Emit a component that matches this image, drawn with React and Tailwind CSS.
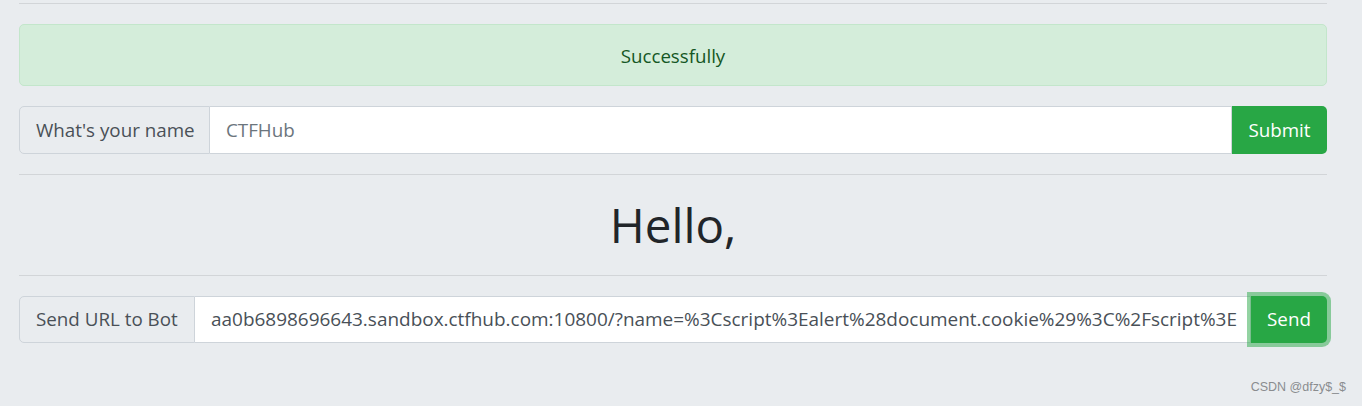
export default function App() {
  const font = { fontFamily: '"Open Sans", "Noto Sans", sans-serif' };
  return (
    <div className="relative w-[1362px] h-[406px] bg-[#e9ecef] overflow-hidden" style={font}>
      <div className="pl-[19px] pr-[35px] pt-[3px]">
        <div className="border-t border-[#d2d5d8]" />
        <div className="mt-[20px] h-[62px] pt-[3px] rounded-[5px] border border-[#c3e6cb] bg-[#d4edda] text-[#155724] text-[18.7px] flex items-center justify-center">
          Successfully
        </div>
        <div className="mt-[20px] flex h-[48px]">
          <div className="w-[191px] shrink-0 flex items-center pl-[16px] border border-[#ced4da] rounded-l-[5px] bg-[#e9ecef] text-[#495057] text-[18.8px]">
            What's your name
          </div>
          <div className="flex-1 flex items-center pl-[16px] bg-white border border-l-0 border-[#ced4da] text-[#6c757d] text-[18.8px]">
            CTFHub
          </div>
          <div className="w-[95px] shrink-0 flex items-center justify-center bg-[#28a745] text-white text-[18.8px] rounded-r-[5px]">
            Submit
          </div>
        </div>
        <div className="mt-[20px] border-t border-[#d2d5d8]" />
        <div className="h-[100px] flex items-center justify-center text-[47.5px] text-[#212529] leading-none">
          Hello,
        </div>
        <div className="border-t border-[#d2d5d8]" />
        <div className="mt-[20px] flex h-[47px]">
          <div className="w-[176px] shrink-0 flex items-center pl-[16px] border border-[#ced4da] rounded-l-[5px] bg-[#e9ecef] text-[#495057] text-[18.8px]">
            Send URL to Bot
          </div>
          <div className="flex-1 min-w-0 overflow-hidden whitespace-nowrap flex items-center pl-[16px] bg-white border border-l-0 border-[#ced4da] text-[#495057] text-[18.97px]">
            aa0b6898696643.sandbox.ctfhub.com:10800/?name=%3Cscript%3Ealert%28document.cookie%29%3C%2Fscript%3E
          </div>
          <div className="relative z-10 w-[76px] shrink-0 flex items-center justify-center bg-[#28a745] text-white text-[18.8px] rounded-r-[5px] ring-4 ring-[#28a745]/50">
            Send
          </div>
        </div>
      </div>
      <div className="absolute right-[16px] bottom-[9px] text-[12.5px] text-[#8a8c8f]" style={{ fontFamily: '"Liberation Sans", Arial, sans-serif' }}>
        CSDN @dfzy$_$
      </div>
    </div>
  );
}
